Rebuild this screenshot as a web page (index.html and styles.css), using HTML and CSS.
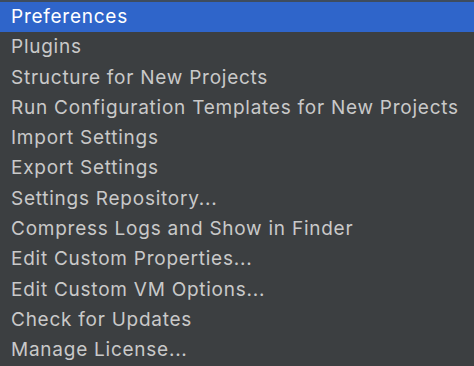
FILE: index.html
```html
<!DOCTYPE html>
<html lang="en">
<head>
    <meta charset="UTF-8">
    <title>Preferences menu</title>
    <link rel="stylesheet" href="styles.css">
</head>
<body>
    <ul class="menu">
        <li class="menu-item selected">Preferences</li>
        <li class="menu-item">Plugins</li>
        <li class="menu-item">Structure for New Projects</li>
        <li class="menu-item">Run Configuration Templates for New Projects</li>
        <li class="menu-item">Import Settings</li>
        <li class="menu-item">Export Settings</li>
        <li class="menu-item">Settings Repository...</li>
        <li class="menu-item">Compress Logs and Show in Finder</li>
        <li class="menu-item">Edit Custom Properties...</li>
        <li class="menu-item">Edit Custom VM Options...</li>
        <li class="menu-item">Check for Updates</li>
        <li class="menu-item">Manage License...</li>
    </ul>
</body>
</html>
```

FILE: styles.css
```css
body {
    margin: 0;
    background: #3c3f41;
    font-family: Inter, 'Noto Sans', sans-serif;
    overflow: hidden;
}

.menu {
    list-style: none;
    margin: 0;
    padding: 2px 0 0;
    background: #3c3f41;
    box-shadow: inset 0 2px 0 #3e4c5e;
    min-height: 364px;
}

.menu-item {
    height: 30.3px;
    line-height: 30px;
    padding-left: 11px;
    font-size: 19px;
    letter-spacing: 0.75px;
    color: #c9c9c9;
    white-space: nowrap;
}

.menu-item.selected {
    background: #2f65ca;
    color: #ffffff;
}
```
